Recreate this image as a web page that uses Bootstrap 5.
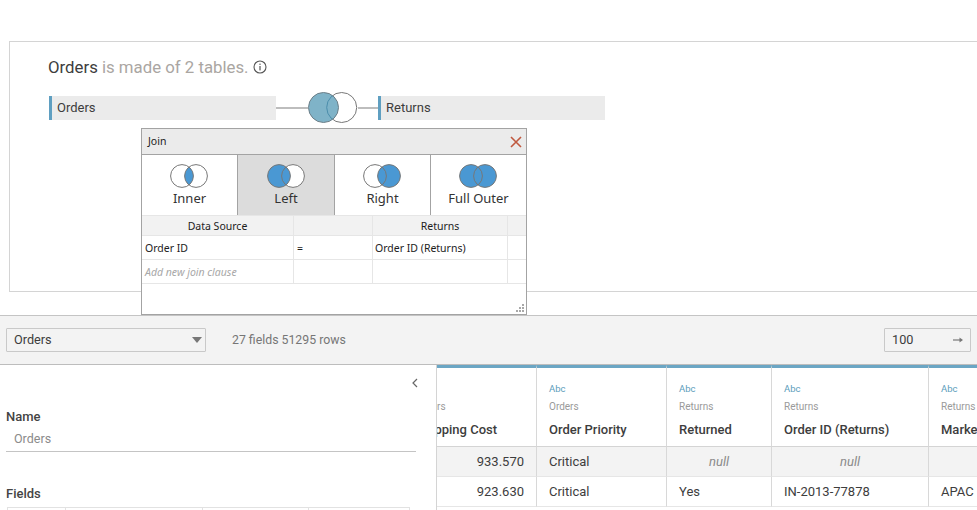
<!DOCTYPE html>
<html lang="en">
<head>
<meta charset="utf-8">
<title>Data source join</title>
<link href="https://cdn.jsdelivr.net/npm/bootstrap@5.3.0/dist/css/bootstrap.min.css" rel="stylesheet">
<style>
html,body{height:510px;overflow:hidden;background:#fff}
body{font-family:Roboto,"Open Sans",sans-serif;font-size:12.3px;color:#333}
.stage{height:510px;overflow:hidden}
.canvas-pane{margin:41px 0 0 9px;height:251px;border:1px solid #d4d4d4;border-right:0;padding:14px 0 0 38px}
.heading{font-size:16.8px;line-height:22px;height:22px;color:#aaa6a2}
.heading b{font-weight:400;color:#3d3d3d}
.info{width:14px;height:14px}
.join-row{margin:14px 0 0 1px;height:31px}
.tbl-pill{width:227px;height:24px;background:#ebebeb;border-left:3px solid #5f9fc1;padding-left:5px;line-height:24px;font-size:13px;color:#3d3d3d}
.link-line{height:2px;background:#bdbdbd}
.l1{width:32px}.l2{width:20px}
.toolbar{margin-top:23px;height:50px;background:#f3f3f3;border-top:1px solid #c4c4c4;border-bottom:1px solid #bdbdbd;padding:0 6px}
.pick{height:24px;border:1px solid #c9c9c9;border-radius:1px;padding:0 7px;font-size:12.7px;line-height:22px;color:#3d3d3d}
.pick-a{width:200px;padding-right:3px}.pick-b{width:87px}
.tri{width:0;height:0;border-left:5px solid transparent;border-right:5px solid transparent;border-top:6px solid #777}
.stats{margin-left:26px;color:#767676}
.lower{height:145px}
.side{width:437px;flex:none;border-right:1px solid #d4d4d4;padding:0 20px 0 6px;position:relative;z-index:1;background:#fff}
.chev{height:43px;padding:13px 0 0}
.chev svg{display:block;margin-left:auto;margin-right:-2px}
.lbl{font-weight:500;color:#444;line-height:18px;font-size:13px}
.name-val{height:26px;padding:3px 0 0 8px;border-bottom:1px solid #c4c4c4;color:#8b8b8b;line-height:20px;font-size:12.5px}
.fields-lbl{margin-top:33px}
.fields-grid{display:grid;grid-template-columns:58px 137px 106px 1fr;margin:4px 0 0 1px;width:403px;height:20px;border:1px solid #e2e2e2}
.fields-grid i{border-right:1px solid #e2e2e2}
.fields-grid i:last-child{border:0}
.datagrid{flex:1;min-width:0;overflow:hidden}
.dg{table-layout:fixed;width:630px;margin:0 0 0 -38px;border-collapse:separate;border-spacing:0}
.dg th,.dg td{padding:0 0 0 12px;border-right:1px solid #d8d8d8;font-size:13px;color:#3d3d3d;white-space:nowrap;overflow:hidden}
.dg thead th{height:82px;border-top:3px solid #6ba6c4;border-bottom:1px solid #d4d4d4;font-weight:500;vertical-align:top;padding-top:15px}
.dg thead th:first-child{padding-left:17px}
.dg td{height:30px;border-bottom:1px solid #e6e6e6;vertical-align:middle}
.dg tbody tr:first-child td{background:#f3f3f3}
.dg td.num{text-align:right;padding-right:12px}
.dg td.nul{text-align:center;font-style:italic;color:#8a8a8a;padding:0}
.abc{display:block;font-size:9.5px;font-weight:400;color:#5b9dbb;line-height:12px}
.src{display:block;font-size:10px;font-weight:400;color:#9a9a9a;line-height:12px;margin-top:6px}
.cap{display:block;line-height:18px;margin-top:8px}
.join-dlg{position:absolute;left:141px;top:128px;width:386px;height:187px;background:#fff;border:1px solid #a3a3a3;font-size:10.5px;color:#1c1c1c;z-index:5;font-family:"Noto Sans","Open Sans",sans-serif}
.dlg-head{height:26px;background:#ebebeb;border-bottom:1px solid #a3a3a3;padding:0 4px 0 6px;font-size:10.5px}
.type-row{height:60px;display:grid;grid-template-columns:96px 97px 96px 1fr}
.type-opt{border-right:1px solid #a3a3a3;padding-top:9px;text-align:center;font-size:13px;line-height:18px;color:#333}
.type-opt:last-child{border-right:0}
.type-opt.on{background:#dcdcdc}
.type-opt svg{display:block;margin:0 auto 1px}
.type-opt:not(.on) svg{transform:translateX(-1px)}
.clause{display:grid;grid-template-columns:152px 79px 135px 1fr;border-top:1px solid #e6e6e6}
.clause>div{border-right:1px solid #e6e6e6;border-bottom:1px solid #e6e6e6;height:24px;line-height:23px;padding:1px 0 0 3px;white-space:nowrap;overflow:hidden}
.clause>div:nth-child(3){padding-left:2px}
.clause>div:nth-child(4n){border-right:0}
.clause.hd>div{background:#f2f2f2;text-align:center;height:20px;line-height:19px;padding:1px 0 0}
.clause+.clause{border-top:0}
.hint{font-style:italic;color:#a8a8a8}
.grip{position:absolute;right:1px;bottom:1px}
</style>
</head>
<body>
<div class="stage position-relative">
  <svg width="0" height="0" class="d-block" aria-hidden="true"><defs>
    <clipPath id="cl"><circle cx="12" cy="12" r="11.4"/></clipPath>
    <clipPath id="cm"><circle cx="15.5" cy="15.5" r="15"/></clipPath>
  </defs></svg>

  <section class="canvas-pane">
    <div class="heading d-flex align-items-center"><span><b>Orders</b> is made of 2 tables.</span>
      <svg class="info ms-1" viewBox="0 0 14 14"><circle cx="7" cy="7" r="6" fill="none" stroke="#555" stroke-width="1.1"/><rect x="6.4" y="6" width="1.2" height="4.4" fill="#555"/><rect x="6.4" y="3.6" width="1.2" height="1.3" fill="#555"/></svg>
    </div>
    <div class="join-row d-flex align-items-center">
      <div class="tbl-pill">Orders</div>
      <div class="link-line l1"></div>
      <svg width="50" height="31" viewBox="0 0 50 31">
        <circle cx="33.7" cy="15.5" r="15" fill="#fff" stroke="#777"/>
        <circle cx="15.5" cy="15.5" r="15" fill="#7fb3c8" stroke="#6d7f88"/>
        <circle cx="33.7" cy="15.5" r="15" fill="none" stroke="#4b8dab" clip-path="url(#cm)"/>
      </svg>
      <div class="link-line l2"></div>
      <div class="tbl-pill">Returns</div>
    </div>
  </section>

  <div class="toolbar d-flex align-items-center">
    <div class="pick pick-a d-flex align-items-center justify-content-between"><span>Orders</span><span class="tri"></span></div>
    <span class="stats">27 fields 51295 rows</span>
    <div class="pick pick-b d-flex align-items-center justify-content-between ms-auto"><span>100</span>
      <svg width="10" height="8" viewBox="0 0 10 8"><path d="M0 4h7" stroke="#777" stroke-width="1.2"/><path d="M6.5 1.5L10 4 6.5 6.5z" fill="#777"/></svg>
    </div>
  </div>

  <div class="lower d-flex">
    <aside class="side">
      <div class="chev"><svg width="6" height="10" viewBox="0 0 6 10"><path d="M5 1L1 5l4 4" fill="none" stroke="#666" stroke-width="1.2"/></svg></div>
      <div class="lbl">Name</div>
      <div class="name-val">Orders</div>
      <div class="lbl fields-lbl">Fields</div>
      <div class="fields-grid"><i></i><i></i><i></i><i></i></div>
    </aside>
    <div class="datagrid">
      <table class="dg">
        <colgroup><col style="width:138px"><col style="width:130px"><col style="width:105px"><col style="width:157px"><col style="width:100px"></colgroup>
        <thead><tr>
          <th><span class="abc">&nbsp;</span><span class="src">Orders</span><span class="cap">Shipping Cost</span></th>
          <th><span class="abc">Abc</span><span class="src">Orders</span><span class="cap">Order Priority</span></th>
          <th><span class="abc">Abc</span><span class="src">Returns</span><span class="cap">Returned</span></th>
          <th><span class="abc">Abc</span><span class="src">Returns</span><span class="cap">Order ID (Returns)</span></th>
          <th><span class="abc">Abc</span><span class="src">Returns</span><span class="cap">Market (Returns)</span></th>
        </tr></thead>
        <tbody>
          <tr><td class="num">933.570</td><td>Critical</td><td class="nul">null</td><td class="nul">null</td><td></td></tr>
          <tr><td class="num">923.630</td><td>Critical</td><td>Yes</td><td>IN-2013-77878</td><td>APAC</td></tr>
        </tbody>
      </table>
    </div>
  </div>

  <div class="join-dlg">
    <div class="dlg-head d-flex align-items-center justify-content-between"><span>Join</span>
      <svg width="12" height="12" viewBox="0 0 12 12"><path d="M1 1l10 10M11 1L1 11" stroke="#c0593f" stroke-width="1.6"/></svg>
    </div>
    <div class="type-row">
      <div class="type-opt">
        <svg width="38" height="24" viewBox="0 0 38 24"><circle cx="26" cy="12" r="11.4" fill="#4a98d3" clip-path="url(#cl)"/><circle cx="12" cy="12" r="11.4" fill="none" stroke="#777"/><circle cx="26" cy="12" r="11.4" fill="none" stroke="#777"/></svg>
        Inner
      </div>
      <div class="type-opt on">
        <svg width="38" height="24" viewBox="0 0 38 24"><circle cx="26" cy="12" r="11.4" fill="#fff"/><circle cx="12" cy="12" r="11.4" fill="#4a98d3" stroke="#777"/><circle cx="26" cy="12" r="11.4" fill="none" stroke="#777"/></svg>
        Left
      </div>
      <div class="type-opt">
        <svg width="38" height="24" viewBox="0 0 38 24"><circle cx="12" cy="12" r="11.4" fill="#fff"/><circle cx="26" cy="12" r="11.4" fill="#4a98d3" stroke="#777"/><circle cx="12" cy="12" r="11.4" fill="none" stroke="#777"/></svg>
        Right
      </div>
      <div class="type-opt">
        <svg width="38" height="24" viewBox="0 0 38 24"><circle cx="12" cy="12" r="11.4" fill="#4a98d3"/><circle cx="26" cy="12" r="11.4" fill="#4a98d3"/><circle cx="12" cy="12" r="11.4" fill="none" stroke="#777"/><circle cx="26" cy="12" r="11.4" fill="none" stroke="#777"/></svg>
        Full Outer
      </div>
    </div>
    <div class="clause hd"><div>Data Source</div><div></div><div>Returns</div><div></div></div>
    <div class="clause"><div>Order ID</div><div>=</div><div>Order ID (Returns)</div><div></div></div>
    <div class="clause"><div class="hint">Add new join clause</div><div></div><div></div><div></div></div>
    <svg class="grip" width="10" height="10" viewBox="0 0 10 10" fill="#a8a8a8"><rect x="7" y="1" width="2" height="2"/><rect x="4" y="4" width="2" height="2"/><rect x="7" y="4" width="2" height="2"/><rect x="1" y="7" width="2" height="2"/><rect x="4" y="7" width="2" height="2"/><rect x="7" y="7" width="2" height="2"/></svg>
  </div>
</div>
<script src="https://cdn.jsdelivr.net/npm/bootstrap@5.3.0/dist/js/bootstrap.bundle.min.js"></script>
</body>
</html>
